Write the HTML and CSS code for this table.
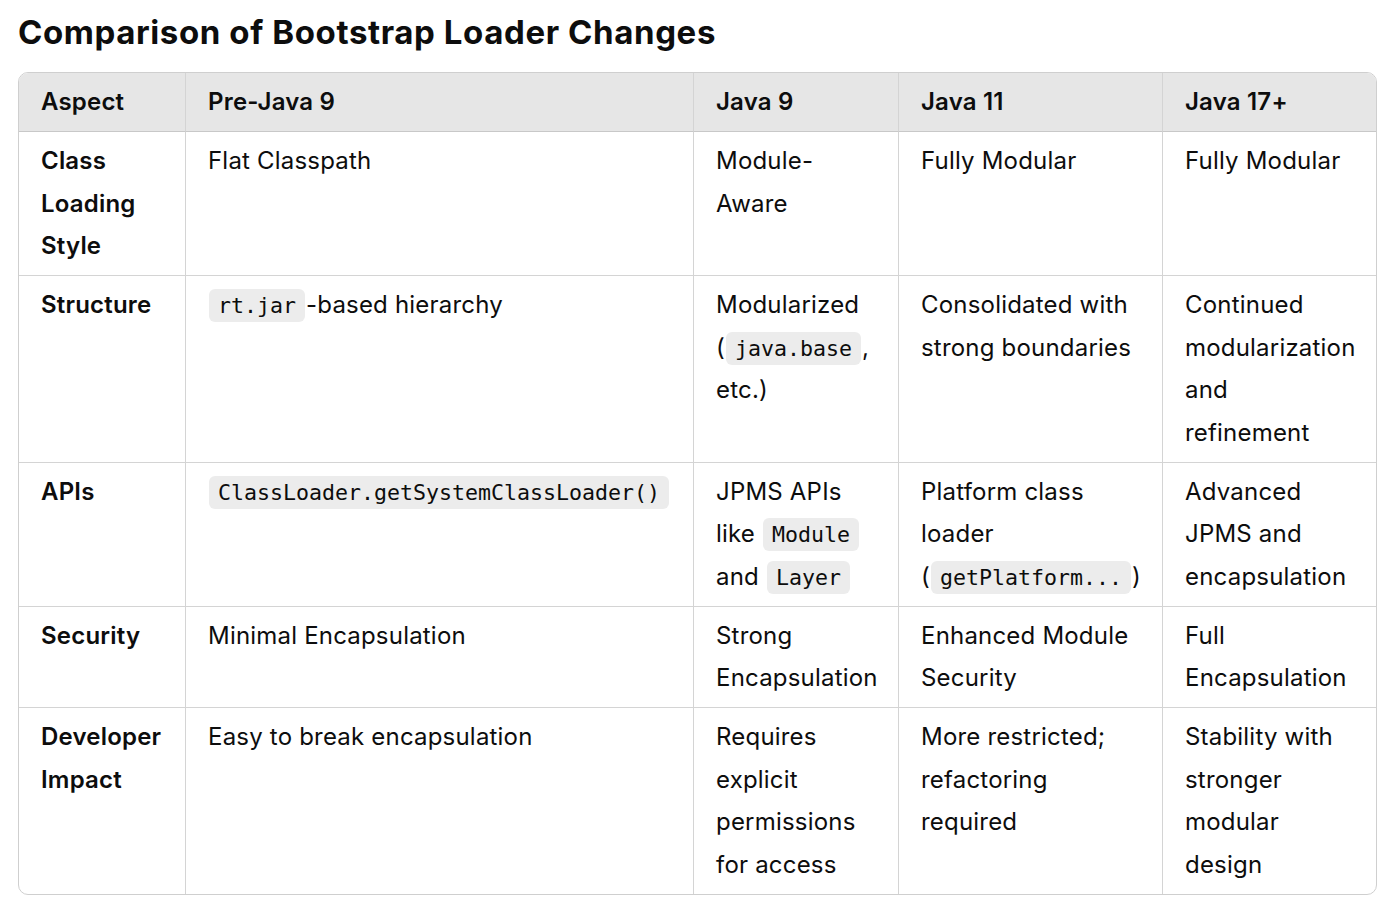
FILE: index.html
```html
<!DOCTYPE html>
<html>
<head>
<meta charset="utf-8">
<link rel="stylesheet" href="styles.css">
</head>
<body>
<div class="page">
  <h1 class="title">Comparison of Bootstrap Loader Changes</h1>
  <div class="table-wrap">
    <table class="cmp">
      <colgroup>
        <col class="c1"><col class="c2"><col class="c3"><col class="c4"><col class="c5">
      </colgroup>
      <thead>
        <tr><th>Aspect</th><th>Pre-Java 9</th><th>Java 9</th><th>Java 11</th><th>Java 17+</th></tr>
      </thead>
      <tbody>
        <tr>
          <td class="aspect">Class Loading Style</td>
          <td>Flat Classpath</td>
          <td>Module-Aware</td>
          <td>Fully Modular</td>
          <td>Fully Modular</td>
        </tr>
        <tr>
          <td class="aspect">Structure</td>
          <td><code>rt.jar</code>-based hierarchy</td>
          <td>Modularized (<code>java.base</code>, etc.)</td>
          <td>Consolidated with strong boundaries</td>
          <td>Continued modularization and refinement</td>
        </tr>
        <tr>
          <td class="aspect">APIs</td>
          <td><code>ClassLoader.getSystemClassLoader()</code></td>
          <td>JPMS APIs like <code>Module</code> and <code>Layer</code></td>
          <td>Platform class loader (<code>getPlatform...</code>)</td>
          <td>Advanced JPMS and encapsulation</td>
        </tr>
        <tr>
          <td class="aspect">Security</td>
          <td>Minimal Encapsulation</td>
          <td>Strong Encapsulation</td>
          <td>Enhanced Module Security</td>
          <td>Full Encapsulation</td>
        </tr>
        <tr>
          <td class="aspect">Developer Impact</td>
          <td>Easy to break encapsulation</td>
          <td>Requires explicit permissions for access</td>
          <td>More restricted; refactoring required</td>
          <td>Stability with stronger modular design</td>
        </tr>
      </tbody>
    </table>
  </div>
</div>
</body>
</html>
```

FILE: styles.css
```css
html, body {
  margin: 0;
  padding: 0;
  background: #ffffff;
}

body {
  font-family: Inter, "Noto Sans", "Liberation Sans", sans-serif;
  color: #0d0d0d;
}

.page {
  padding: 12px 18px 0 18px;
}

.title {
  margin: 0 0 20px 0;
  font-size: 33px;
  line-height: 40px;
  font-weight: 700;
  letter-spacing: 0.6px;
}

.table-wrap {
  width: 1359px;
  box-sizing: border-box;
  border: 1px solid #cfcfcf;
  border-radius: 10px;
  overflow: hidden;
}

.cmp {
  width: 100%;
  border-collapse: separate;
  border-spacing: 0;
  table-layout: fixed;
  font-size: 24px;
  line-height: 42.5px;
  letter-spacing: 0.2px;
}

.c1 { width: 167px; }
.c2 { width: 508px; }
.c3 { width: 205px; }
.c4 { width: 264px; }
.c5 { width: 213px; }

.cmp th,
.cmp td {
  text-align: left;
  vertical-align: top;
  padding: 8px 20px 7.5px 22px;
  border-right: 1px solid #d4d4d4;
  border-bottom: 1px solid #d4d4d4;
}

.cmp th:last-child,
.cmp td:last-child {
  border-right: none;
}

.cmp tbody tr:last-child td {
  border-bottom: none;
}

.cmp thead th {
  background: #e6e6e6;
  font-weight: 600;
  border-bottom-color: #c8c8c8;
}

.cmp td.aspect {
  font-weight: 600;
}

.cmp code {
  font-family: "DejaVu Sans Mono", "Liberation Mono", monospace;
  font-size: 21.6px;
  line-height: 1;
  letter-spacing: 0;
  background: #ececec;
  border-radius: 6px;
  padding: 4px 9px;
  margin: 0 1px;
}
```
